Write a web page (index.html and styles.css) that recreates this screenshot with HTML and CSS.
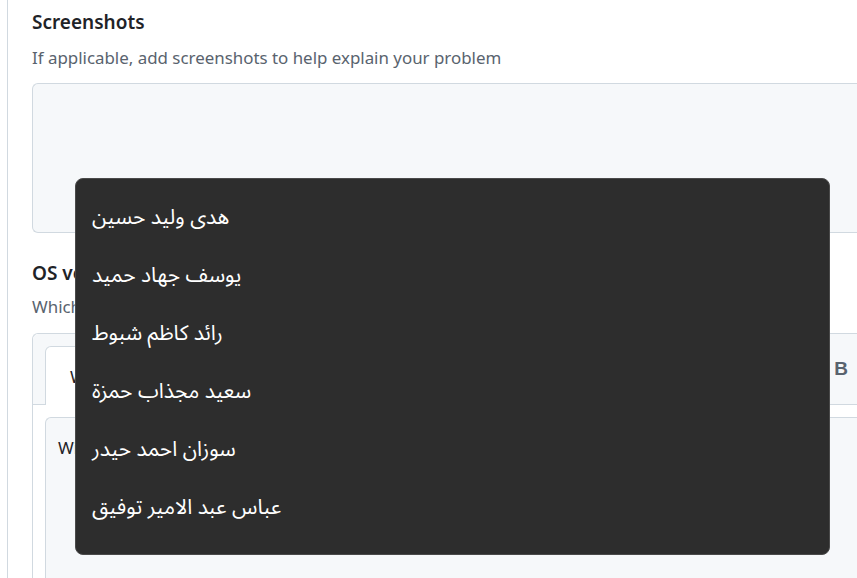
FILE: index.html
```html
<!DOCTYPE html>
<html lang="en">
<head>
<meta charset="utf-8">
<title>Issue form</title>
<link rel="stylesheet" href="styles.css">
</head>
<body>
<div class="page">
  <section class="field">
    <h3 class="label">Screenshots</h3>
    <p class="desc">If applicable, add screenshots to help explain your problem</p>
    <div class="textarea tall"></div>
  </section>
  <section class="field second">
    <h3 class="label">OS version</h3>
    <p class="desc">Which operating system are you using?</p>
    <div class="editor">
      <div class="tabbar">
        <div class="tab">Write</div>
        <div class="tab-spacer"></div>
        <div class="toolbar"><span class="tool-b">B</span></div>
      </div>
      <div class="editor-body">
        <div class="textarea inner">Windows 11</div>
      </div>
    </div>
  </section>
</div>
<ul class="menu">
  <li class="item">هدى وليد حسين</li>
  <li class="item">يوسف جهاد حميد</li>
  <li class="item">رائد كاظم شبوط</li>
  <li class="item">سعيد مجذاب حمزة</li>
  <li class="item">سوزان احمد حيدر</li>
  <li class="item">عباس عبد الامير توفيق</li>
</ul>
</body>
</html>
```

FILE: styles.css
```css
html, body {
  margin: 0;
  padding: 0;
  background: #ffffff;
  overflow: hidden;
}
body {
  width: 857px;
  height: 578px;
  font-family: "Noto Sans", "Liberation Sans", sans-serif;
  color: #1f2328;
}
.page {
  margin-left: 7px;
  border-left: 1px solid #d1d9e0;
  padding: 10px 0 0 24px;
  width: 850px;
  height: 578px;
  box-sizing: border-box;
  overflow: hidden;
}
.label {
  margin: 0;
  font-size: 19px;
  line-height: 24px;
  font-weight: 600;
  color: #1f2328;
  white-space: nowrap;
}
.desc {
  margin: 12px 0 0;
  font-size: 16.9px;
  line-height: 24px;
  color: #59636e;
  white-space: nowrap;
}
.textarea {
  background: #f6f8fa;
  border: 1px solid #d1d9e0;
  border-radius: 6px;
  box-sizing: border-box;
}
.tall {
  margin-top: 13px;
  height: 150px;
  border-right: none;
  border-radius: 6px 0 0 6px;
}
.second {
  margin-top: 28px;
}
.second .desc {
  margin-top: 10px;
}
.editor {
  margin-top: 14px;
  border: 1px solid #d1d9e0;
  border-right: none;
  border-radius: 6px 0 0 6px;
  height: 320px;
  box-sizing: border-box;
}
.tabbar {
  display: flex;
  align-items: flex-end;
  background: #f6f8fa;
  border-bottom: 1px solid #d1d9e0;
  border-radius: 6px 0 0 0;
  padding: 12px 0 0 12px;
  height: 71px;
  box-sizing: border-box;
}
.tab {
  height: 59px;
  box-sizing: border-box;
  padding: 0 24px;
  display: flex;
  align-items: center;
  background: #ffffff;
  border: 1px solid #d1d9e0;
  border-bottom: none;
  border-radius: 6px 6px 0 0;
  margin-bottom: -1px;
  font-size: 17px;
  color: #1f2328;
}
.tab-spacer {
  flex: 1;
}
.toolbar {
  align-self: stretch;
  display: flex;
  align-items: center;
  padding: 0 9px 12px 0;
}
.tool-b {
  font-family: "Liberation Sans", sans-serif;
  font-weight: 700;
  font-size: 19px;
  color: #59636e;
}
.editor-body {
  padding: 12px 0 12px 12px;
}
.inner {
  height: 220px;
  padding: 18px 12px;
  font-size: 17px;
  color: #1f2328;
  border-right: none;
  border-radius: 6px 0 0 6px;
  white-space: nowrap;
}
.menu {
  position: absolute;
  left: 75px;
  top: 178px;
  width: 755px;
  height: 377px;
  margin: 0;
  padding: 9px 0 0;
  list-style: none;
  box-sizing: border-box;
  background: #2d2d2d;
  border: 1px solid #4a4a4a;
  border-radius: 8px;
}
.item {
  height: 58px;
  display: flex;
  align-items: center;
  padding: 0 16px;
  font-family: "Noto Sans Arabic", "DejaVu Sans", sans-serif;
  font-size: 21px;
  color: #ffffff;
}
```
